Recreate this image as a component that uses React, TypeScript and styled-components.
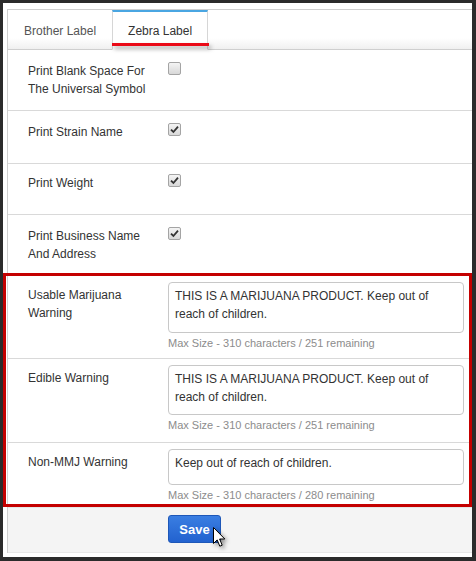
import React from "react";
import styled, { createGlobalStyle } from "styled-components";

const GlobalStyle = createGlobalStyle`
  html, body {
    margin: 0;
    padding: 0;
    background: #2b2b2b;
  }
  body {
    font-family: "Liberation Sans", Arial, sans-serif;
    font-size: 12px;
    color: #333;
  }
`

const Frame = styled.div`
  width: 476px;
  height: 561px;
  box-sizing: border-box;
  padding: 3px 4px 4px 3px;
`

const Sheet = styled.div`
  height: 100%;
  background: #fff;
  padding: 6px 0 4px 4px;
  box-sizing: border-box;
  display: flex;
  flex-direction: column;
`

const Panel = styled.div`
  flex: 1;
  display: flex;
  flex-direction: column;
  border-left: 1px solid #cfcfcf;
  border-top: 1px solid #cfcfcf;
`

const TabStrip = styled.div`
  display: flex;
  height: 39px;
  border-bottom: 1px solid #cfcfcf;
  background: linear-gradient(to bottom, #fff 72%, #f0f0f0 100%);
`

const Tab = styled.div<{ $active?: boolean }>`
  position: relative;
  display: flex;
  align-items: center;
  padding: 0 15px;
  margin-bottom: -1px;
  border: 1px solid transparent;
  border-top: 2px solid transparent;
  color: #555;
  ${(p) =>
    p.$active &&
    `
    background: #fff;
    color: #333;
    border-color: #d6d6d6;
    border-top-color: #4aa6e2;
    border-bottom-color: #fff;
  `}
`

const TabMark = styled.span`
  position: absolute;
  left: -1px;
  right: -2px;
  bottom: 3px;
  height: 3px;
  background: #ea0a17;
  box-shadow: 2px 3px 4px rgba(0, 0, 0, 0.35);
`

const Row = styled.div<{ $h: number; $pt?: number; $line?: boolean }>`
  display: grid;
  grid-template-columns: 140px 296px;
  column-gap: 0;
  height: ${(p) => p.$h}px;
  box-sizing: border-box;
  padding: ${(p) => p.$pt ?? 12}px 0 0 20px;
  border-bottom: ${(p) => (p.$line === false ? "none" : "1px solid #d9d9d9")};
  align-items: start;
`

const Label = styled.div<{ $mt?: number }>`
  line-height: 18px;
  margin-top: ${(p) => p.$mt ?? 0}px;
  color: #333;
`

const Box = styled.span`
  width: 11px;
  height: 11px;
  margin-top: 0;
  border: 1px solid #a4a4a4;
  border-radius: 2px;
  background: linear-gradient(to bottom, #f4f4f4, #d8d8d8);
  display: flex;
  align-items: center;
  justify-content: center;
`

const Highlight = styled.div`
  margin-left: -5px;
  border: 3px solid #c40000;
  padding-left: 1px;
`

const HighlightInner = styled.div`
  border-left: 1px solid #d4d4d4;
`

const Field = styled.div`
  display: flex;
  flex-direction: column;
`

const Area = styled.div<{ $h: number }>`
  height: ${(p) => p.$h}px;
  box-sizing: border-box;
  border: 1px solid #c8c8c8;
  border-radius: 4px;
  padding: 4px 6px;
  line-height: 18px;
  color: #333;
  background: #fff;
`

const Help = styled.div`
  margin-top: 3px;
  font-size: 11px;
  line-height: 14px;
  color: #8c8c8c;
`

const Footer = styled.div`
  flex: 1;
  background: #f4f4f4;
  border-top: 1px solid #e6e6e6;
  border-bottom: 1px solid #e8e8e8;
  padding: 7px 0 0 160px;
`

const ButtonWrap = styled.div`
  position: relative;
  display: inline-block;
`

const SaveButton = styled.button`
  width: 53px;
  height: 28px;
  border: 1px solid #1d57b8;
  border-radius: 3px;
  background: linear-gradient(to bottom, #3a7ee2, #2262cf);
  color: #fff;
  font-family: "Liberation Sans", Arial, sans-serif;
  font-size: 13px;
  font-weight: bold;
  padding: 0;
`

const Pointer = styled.svg`
  position: absolute;
  left: 45px;
  top: 12px;
  filter: drop-shadow(2px 2px 2px rgba(0, 0, 0, 0.45));
`

function Check({ on }: { on?: boolean }) {
  return (
    <Box>
      {on && (
        <svg width="9" height="9" viewBox="0 0 9 9">
          <path d="M1 4.6 L3.4 7 L8 1.6" fill="none" stroke="#333" strokeWidth="1.8" />
        </svg>
      )}
    </Box>
  );
}

const warnings = [
  {
    label: ["Usable Marijuana", "Warning"],
    text: "THIS IS A MARIJUANA PRODUCT. Keep out of reach of children.",
    remaining: 251,
    h: 83,
    area: 51,
  },
  {
    label: ["Edible Warning"],
    text: "THIS IS A MARIJUANA PRODUCT. Keep out of reach of children.",
    remaining: 251,
    h: 84,
    area: 50,
  },
  {
    label: ["Non-MMJ Warning"],
    text: "Keep out of reach of children.",
    remaining: 280,
    h: 61,
    area: 36,
  },
];

export default function App() {
  return (
    <>
      <GlobalStyle />
      <Frame>
        <Sheet>
          <Panel>
            <TabStrip>
              <Tab>Brother Label</Tab>
              <Tab $active>
                Zebra Label
                <TabMark />
              </Tab>
            </TabStrip>

            <Row $h={61}>
              <Label>
                Print Blank Space For
                <br />
                The Universal Symbol
              </Label>
              <Check />
            </Row>
            <Row $h={53}>
              <Label>Print Strain Name</Label>
              <Check on />
            </Row>
            <Row $h={51} $pt={10}>
              <Label>Print Weight</Label>
              <Check on />
            </Row>
            <Row $h={58} $line={false}>
              <Label>
                Print Business Name
                <br />
                And Address
              </Label>
              <Check on />
            </Row>

            <Highlight>
              <HighlightInner>
                {warnings.map((w, i) => (
                  <Row key={i} $h={w.h} $pt={6} $line={i < warnings.length - 1}>
                    <Label $mt={4}>
                      {w.label.map((l, j) => (
                        <div key={j}>{l}</div>
                      ))}
                    </Label>
                    <Field>
                      <Area $h={w.area}>{w.text}</Area>
                      <Help>Max Size - 310 characters / {w.remaining} remaining</Help>
                    </Field>
                  </Row>
                ))}
              </HighlightInner>
            </Highlight>

            <Footer>
              <ButtonWrap>
                <SaveButton>Save</SaveButton>
                <Pointer width="13" height="21" viewBox="0 0 13 21">
                  <path
                    d="M0.5 0.5 L0.5 16.5 L4.2 12.9 L6.8 19.2 L9.2 18.2 L6.6 12 L11.8 12 Z"
                    fill="#fff"
                    stroke="#000"
                    strokeWidth="1"
                    strokeLinejoin="round"
                  />
                </Pointer>
              </ButtonWrap>
            </Footer>
          </Panel>
        </Sheet>
      </Frame>
    </>
  );
}
